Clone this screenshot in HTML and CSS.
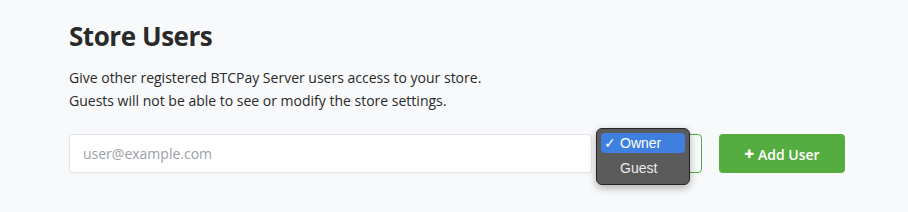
FILE: index.html
```html
<!DOCTYPE html>
<html lang="en">
<head>
    <meta charset="UTF-8">
    <title>Store Users</title>
    <link rel="stylesheet" href="styles.css">
</head>
<body>
    <div class="container">
        <h2 class="title">Store Users</h2>
        <p class="lead">Give other registered BTCPay Server users access to your store.<br>
            Guests will not be able to see or modify the store settings.</p>

        <div class="add-row">
            <div class="input-group">
                <input class="email" type="text" placeholder="user@example.com">
                <div class="role-select">
                    <!-- native menu opened over the select -->
                    <div class="role-menu">
                        <div class="role-item selected"><span class="check">✓</span>Owner</div>
                        <div class="role-item">Guest</div>
                    </div>
                </div>
            </div>
            <button class="btn-add"><span class="plus">+</span> Add User</button>
        </div>
    </div>
</body>
</html>
```

FILE: styles.css
```css
html,
body {
    min-height: 100vh;
}

body {
    margin: 0;
    background-color: #f8f9fa;
    font-family: "Open Sans", "Noto Sans", sans-serif;
    color: #292929;
}

.container {
    padding: 20px 0 40px 69px;
}

.title {
    margin: 0 0 14px;
    font-size: 26px;
    font-weight: 700;
    line-height: 32px;
    letter-spacing: -0.45px;
}

.lead {
    margin: 0 0 22px;
    font-size: 14px;
    line-height: 23px;
}

.add-row {
    display: flex;
    align-items: center;
    gap: 17px;
}

.input-group {
    display: flex;
    gap: 4px;
    width: 633px;
    height: 39px;
}

.email {
    width: 523px;
    box-sizing: border-box;
    height: 39px;
    margin: 0;
    padding: 0 13px;
    border: 1px solid #e3e5e8;
    border-radius: 4px;
    background-color: #fff;
    font-family: inherit;
    font-size: 14px;
    color: #292929;
    box-shadow: 0 1px 2px rgba(0, 0, 0, 0.05);
}

.email::placeholder {
    color: #9ca0a5;
}

.role-select {
    position: relative;
    z-index: 5;
    box-sizing: border-box;
    width: 106px;
    height: 39px;
    border: 1px solid #51b13e;
    border-radius: 4px;
    background-color: #fafbfb;
}

.role-menu {
    position: absolute;
    top: -7px;
    left: -1px;
    width: 94px;
    height: 57px;
    box-sizing: border-box;
    padding: 4px 4px 5px;
    display: flex;
    flex-direction: column;
    gap: 5px;
    background-color: #5b5b5b;
    border: 1px solid #262626;
    border-radius: 6px;
    box-shadow: 0 3px 8px rgba(0, 0, 0, 0.3);
    font-family: "Liberation Sans", "Noto Sans", sans-serif;
    font-size: 14px;
    color: #ececec;
}

.role-item {
    position: relative;
    height: 20px;
    line-height: 20px;
    padding-left: 19px;
    border-radius: 4px;
}

.role-item.selected {
    background-color: #3f7fe0;
    color: #fff;
}

.check {
    position: absolute;
    left: 3px;
}

.btn-add {
    width: 126px;
    height: 39px;
    border: none;
    border-radius: 4px;
    background-color: #55ad3f;
    color: #fff;
    font-family: inherit;
    font-size: 14px;
    font-weight: 600;
    cursor: pointer;
}

.plus {
    font-weight: 800;
    font-size: 17px;
}
```
